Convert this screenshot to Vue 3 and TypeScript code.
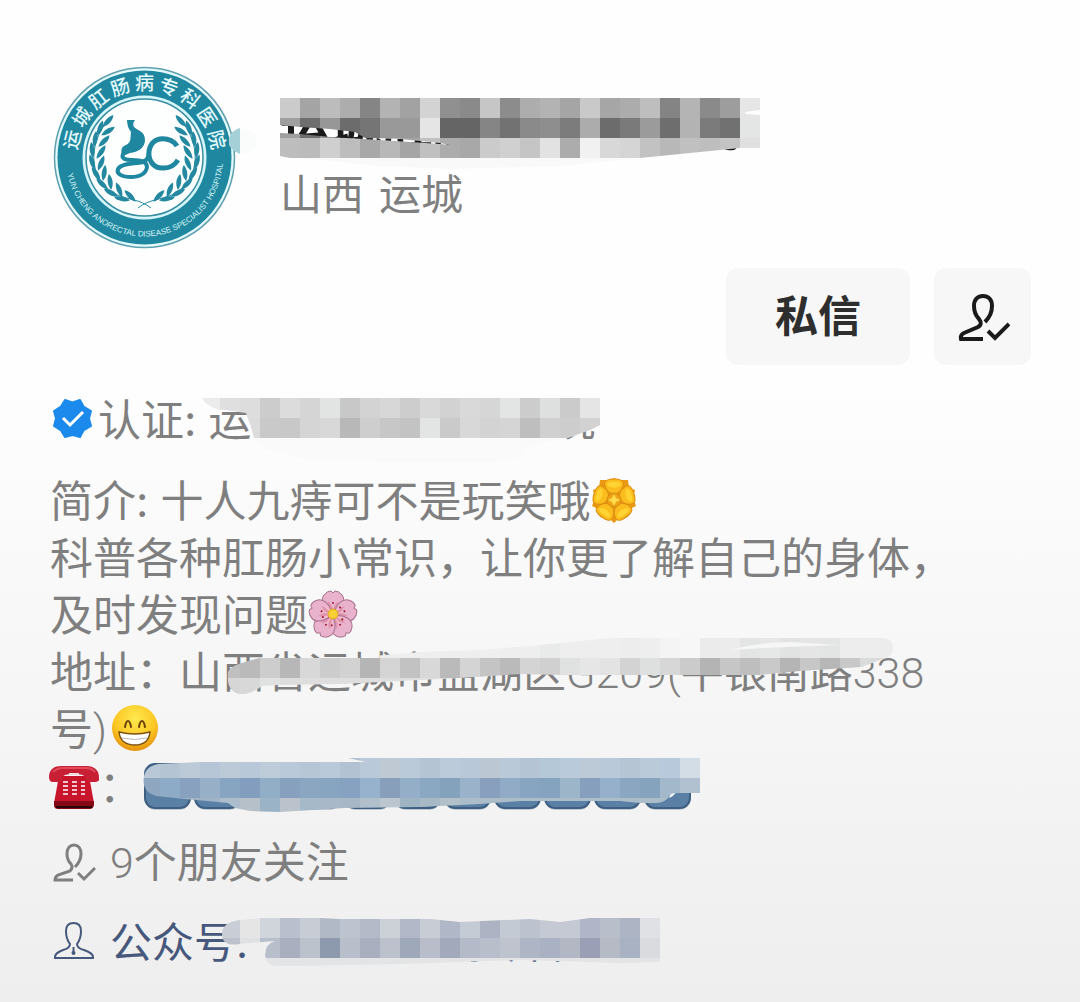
<script setup lang="ts">
interface Mosaic {
  id: string
  x: number
  y: number
  w: number
  h: number
  clip: string
  rows: { x: number; cells: string[] }[]
}

interface Cell {
  x: number
  y: number
  fill: string
}

const CELL = 20

const parse = (colors: string): string[] => colors.split(' ').map((c) => '#' + c)

const fill = (color: string, count: number): string[] => Array(count).fill('#' + color)

const cellsOf = (m: Mosaic): Cell[] =>
  m.rows.flatMap((row, r) =>
    row.cells.map((color, c) => ({ x: row.x + c * CELL, y: m.y + r * CELL, fill: color })),
  )

const masks: Record<string, Mosaic> = {
  name: {
    id: 'name', x: 280, y: 98, w: 480, h: 72,
    clip: 'M280 98H760V110L745 112L746 114L760 115V148H740L700 152L650 157L560 166L450 169L380 166L320 160L290 158L280 156V133L300 134L330 137L380 140L440 144L450 145L440 143L400 139L365 138L355 132L330 129L300 127L280 125Z',
    rows: [
      { x: 280, cells: parse('cbcbcb a4a4a4 bcbcbc adadad 858585 b3b3b3 a2a2a2 d3d3d3 909090 8a8a8a c6c6c6 8c8c8c adadad b3b3b3 a5a5a5 c9c9c9 a6a6a6 acacac bebebe 848484 b4b4b4 8a8a8a 9d9d9d e6e6e6') },
      { x: 280, cells: parse('9f9f9f 6e6e6e 979797 6c6c6c 757575 999999 999999 e5e5e5 656565 656565 858585 727272 8a8a8a 8e8e8e 7c7c7c acacac 6c6c6c 7a7a7a 9b9b9b 6e6e6e b3b3b3 7b7b7b 717171 e3e6e5') },
      { x: 280, cells: parse('bdbdbd bbbbbb cfcfcf bdbdbd a8a8a8 b8b8b8 a5a5a5 c0c0c0 acacac a8a8a8 cbcbcb d0d0d0 c5c5c5 e2e2e2 acacac f1f1f1 d8d8d8 d5d5d5 c2c2c2 b8b8b8 c0c0c0 bebebe c3c3c3 e0e0e0') },
      { x: 280, cells: fill('f9f9f9', 24) },
    ],
  },
  cert: {
    id: 'cert', x: 200, y: 398, w: 400, h: 64,
    clip: 'M202 398H600V425L590 430L568 438L525 448Q525 458 500 462H380L300 458L262 448L254 438L251 427L246 413L225 410Q208 409 202 398Z',
    rows: [
      { x: 200, cells: parse('ebebeb dfdfdf dddddd cccccc dcdcdc d5d5d5 e2e4e3 c8c8c8 d3d3d3 d7d7d7 cdcdcd d9d9d9 d2d2d2 d9d9d9 d6d6d6 e3e5e5 cccccc dedfdf cbcbcb e5e5e5') },
      { x: 240, cells: parse('dcdcdc c9c9c9 c8c8c8 d5d5d5 d8d8d8 b8b8b8 cecece c7c7c7 c3c3c3 e3e5e4 cacaca d8d8d8 d3d3d3 d5d5d5 bebebe d0d0d0 cdcdcd d2d2d2') },
      { x: 240, cells: fill('fafafa', 18) },
      { x: 240, cells: fill('fafafa', 18) },
    ],
  },
  address: {
    id: 'address', x: 220, y: 638, w: 680, h: 60,
    clip: 'M228 672C232 664 246 662 260 658H300L350 658L420 652L480 650L540 645L580 641L610 638H885Q893 640 893 648Q893 656 885 658L862 667L800 671L760 675H560L520 674L460 678L400 681L340 684L280 685L262 686Q250 695 240 694Q226 692 228 672Z',
    rows: [
      { x: 380, cells: parse('eeeeee eeeeee eeeeee eeeeee eeeeee eeefee eeeeee eeeeee e9ebea eeeeee eeeeee eeeeee ededed eeeeee f4f4f4 f7f7f7 ebebeb ececec e3e4e4 e6e8e7 e1e3e3 e5e5e5 e3e5e4 ededed ededed ececec') },
      { x: 220, cells: parse('bfbfbf bababa cdcdcd b7b7b7 d8d8d8 cccccc d2d2d2 b5b5b5 d5d5d5 c2c2c2 d8d8d8 bababa d4d4d4 c4c4c4 bababa d4d4d4 d0d0d0 e0e2e1 e6e6e6 e3e3e3 d3d3d3 dee0df d7d7d7 cbcbcb b4b4b4 c6c6c6 bebebe c9c9c9 b5b5b5 c7c7c7 b7b7b7 c8c8c8 dadcdb dddddd') },
      { x: 220, cells: [...parse('d6d6d6 d8d8d8 e0e1e1 dddddd'), ...fill('dedede', 14)] },
    ],
  },
  phone: {
    id: 'phone', x: 140, y: 758, w: 560, h: 56,
    clip: 'M144 785Q141 768 158 764L200 762H366L348 758H700V793H680Q672 793 668 798Q664 803 655 803H640L620 801H520L480 804L420 807L345 808L280 812L250 811L235 808L228 803L175 798L156 796Q146 793 144 785Z',
    rows: [
      { x: 140, cells: parse('b9c8d6 b5c4d3 bccad8 b6c6d6 bcc9d6 b8c8d8 becbd8 bac9d9 b7c6d5 b9c9d9 b3c2d3 b9c9da bec9d4 bbcad9 b5c4d3 bccbda b8c8d8 bbc8d4 b9c9d8 b5c4d4 b4c8d8 b9cadb bcc9d6 b9c9d9 b5c5d4 bacad9 b8c9dc d3dde6') },
      { x: 140, cells: parse('8fa6c0 8dabc6 88a1bf 97b0c8 87a4c0 829dbd 92adc6 86a0bd 8aa6c0 87a4c0 87a2c0 96b2cc 889fbc 95aec8 8ba8c2 85a2bd 9ab2ca 889fbd 91abc6 87a5c0 85a3bf 9db5c9 869fbd 96afca 8aa6c1 86a3bd a3b8ca b2c1d0') },
      { x: 140, cells: [...parse('9fb3c7 9fb3c7 9fb3c7 9fb3c7 aebdcb b6c0c9 9bb3c6 bcc2cb a6b9c8 a8b8c8 a8b7c6 b0bfcb bcc6ce 9fb4c3 a8b9c6 b2c0ca'), ...fill('acbdca', 12)] },
    ],
  },
  account: {
    id: 'account', x: 220, y: 918, w: 440, h: 48,
    clip: 'M222 934Q222 922 240 920L262 918H320L340 919H430L460 922L530 919L560 922L590 918H660V962L620 963L520 960L400 964L300 966H275Q266 965 265 955Q266 943 275 941L262 942L240 944Q222 947 222 934Z',
    rows: [
      { x: 220, cells: parse('c9ced6 e5e5e5 d0d5db b9bfcc c7ccd5 b1b8c6 bec4cf b5bac8 cbd1d7 b2b8c8 c7ccd5 b0b7c7 c5cbd4 aeb3c4 c4cad3 bcc3cf c5c9d4 c4c9d4 b0b6c7 b9becb adb4c4 dfe1e4') },
      { x: 220, cells: parse('bcc1cb dfe1e3 b8bfcb a9afbe bcc2cb 8d9aad b9bfca a9afbf bcc1cb 9fa8b9 b8bdc9 a2a9ba b5bac8 b9bfca bec3ce aeb5c4 a9b1c2 b3b7c4 9a9fb5 b5bac5 a9b2c2 d9dbdf') },
      { x: 220, cells: fill('e3e4e5', 22) },
    ],
  },
}

const hospital = '运城肛肠病专科医院'
const sealChars = [...hospital].map((char, i) => ({ char, angle: (i - 4) * 19 }))
const keycaps = Array.from({ length: 11 }, (_, i) => i * 50)
const petals = [0, 72, 144, 216, 288]

// One laurel half: centre point and rotation of every leaf on the left side.
const leaves: [number, number, number][] = [
  [108, 121, 42], [100, 128, 20], [108, 131, 58], [95, 139, 8], [104, 141, 44],
  [92, 150, -6], [101, 152, 34], [92, 162, -18], [101, 163, 22], [96, 174, -32],
  [104, 173, 8], [102, 184, -46], [110, 182, -8], [111, 193, -62], [119, 190, -22],
  [122, 199, -80], [130, 196, -44],
]
</script>

<template>
  <main class="page">
    <header class="head">
      <svg class="avatar" viewBox="53 66 204 183" role="img" aria-label="运城肛肠病专科医院">
        <defs>
          <path id="arc-bottom" d="M66 158A78.500 78.500 0 0 0 223 158" />
          <g id="laurel">
            <path d="M108 120C88 145 88 178 115 194C128 200 140 199 151 208" fill="none" stroke="#2489a0" stroke-width="1" />
            <path
              v-for="(l, i) in leaves"
              :key="i"
              d="M0 -8C4 -3 3 4 0 8C-3 3 -3 -3 0 -8Z"
              :transform="`translate(${l[0]} ${l[1]}) rotate(${l[2]})`"
              fill="#2489a0"
            />
          </g>
        </defs>
        <circle cx="144.500" cy="157.500" r="90" fill="#e2fafc" stroke="#5f9fae" stroke-width="1.500" />
        <circle cx="144.500" cy="157.500" r="87" fill="#1f88a0" />
        <circle cx="144.500" cy="157.500" r="62" fill="#d5f6fa" />
        <circle cx="144.500" cy="157.500" r="58.500" fill="#fdffff" stroke="#398ea1" stroke-width="1.500" />
        <text
          v-for="(s, i) in sealChars"
          :key="i"
          class="seal-cn"
          x="144.500"
          y="90"
          text-anchor="middle"
          :transform="`rotate(${s.angle} 144.500 157.500)`"
        >{{ s.char }}</text>
        <text class="seal-en"><textPath href="#arc-bottom" startOffset="16">YUN CHENG ANORECTAL DISEASE SPECIALIST HOSPITAL</textPath></text>
        <use href="#laurel" />
        <use href="#laurel" transform="translate(289 0) scale(-1 1)" />
        <path d="M127 120L135 120Q132 124 134 127C138 131 145 131 145 140C145 148 138 152 130 153L123 156C120 151 121 147 126 145C132 142 130 137 131 132Q127 127 127 120Z" fill="#1f88a0" />
        <path d="M123 154C121 159 126 160 132 160C141 160 147 162 147 167C146 174 139 177 131 177C122 177 116 174 118 169C121 163 134 164 143 162C149 159 148 156 149 152" fill="none" stroke="#1f88a0" stroke-width="4" stroke-linecap="round" />
        <path d="M177 146C172 137 152 134 149 151C148 162 155 169 164 168Q173 168 178 160" fill="none" stroke="#1f88a0" stroke-width="5" />
        <path d="M229 138Q232 130 240 128V154Q232 151 229 145Z" fill="#a5d0d8" />
        <path d="M240 128Q256 130 257 140Q257 152 240 154Z" fill="#fafcfc" />
      </svg>
      <div class="who">
        <h1 class="name">
          {{ hospital }}
          <svg class="mask mask-name" :width="masks.name.w" :height="masks.name.h" :viewBox="`${masks.name.x} ${masks.name.y} ${masks.name.w} ${masks.name.h}`" aria-hidden="true">
            <clipPath id="clip-name"><path :d="masks.name.clip" /></clipPath>
            <g clip-path="url(#clip-name)" shape-rendering="crispEdges">
              <rect v-for="(c, i) in cellsOf(masks.name)" :key="i" :x="c.x" :y="c.y" width="20" height="20" :fill="c.fill" />
            </g>
          </svg>
        </h1>
        <p class="region"><span>山西</span><span>运城</span></p>
      </div>
    </header>

    <div class="actions">
      <button type="button" class="btn message">私信</button>
      <button type="button" class="btn follow" aria-label="已关注">
        <svg width="54" height="50" viewBox="0 0 54 50" fill="none" stroke="#1a1a1a" stroke-width="4">
          <path d="M29 30C34 25 36 19 36 14C36 7 32 4 27 4C22 4 18 7 18 14C18 19 20 24 23 27C26 31 25 33 22 35L8 41Q4 43 5 47H27" />
          <path d="M32 39L39 46L53 32" />
        </svg>
      </button>
    </div>

    <p class="row cert">
      <svg class="badge" width="42" height="42" viewBox="0 0 42 42" aria-hidden="true">
        <path d="M13 2L20.500 4.500L28 2L31.500 8.500L39 13L37 20.500L39 28L31.500 32.500L28 39L20.500 37L13 39L9 32.500L2 28L4 20.500L2 13L9 8.500Z" fill="#1b8aec" stroke="#1b8aec" stroke-width="2" stroke-linejoin="round" />
        <path d="M11 20L18 27L31 14" fill="none" stroke="#fff" stroke-width="3" />
      </svg>
      <span>认证: {{ hospital }}</span>
      <svg class="mask mask-cert" :width="masks.cert.w" :height="masks.cert.h" :viewBox="`${masks.cert.x} ${masks.cert.y} ${masks.cert.w} ${masks.cert.h}`" aria-hidden="true">
        <clipPath id="clip-cert"><path :d="masks.cert.clip" /></clipPath>
        <g clip-path="url(#clip-cert)" shape-rendering="crispEdges">
          <rect v-for="(c, i) in cellsOf(masks.cert)" :key="i" :x="c.x" :y="c.y" width="20" height="20" :fill="c.fill" />
        </g>
      </svg>
    </p>

    <section class="bio">
      <p class="row">
        <span>简介: 十人九痔可不是玩笑哦</span>
        <svg class="emoji" width="48" height="48" viewBox="0 0 48 48" aria-hidden="true">
          <path d="M24 2L29 4L38 4L39 12L45 14L43 22L46 30L40 33L38 41L29 42L24 47L19 42L10 41L8 33L2 30L5 22L3 14L9 12L10 4L19 4Z" fill="#e99a12" />
          <g v-for="a in petals" :key="a" :transform="`rotate(${a} 24 24)`">
            <path d="M15 10C13 4 19 3 24 3C29 3 35 4 33 10Q31 17 24 18Q17 17 15 10Z" fill="#fbbd1d" stroke="#df8c10" stroke-width="1" />
            <path d="M17 9Q18 5 24 6Q30 5 31 9Q24 14 17 9Z" fill="#ffd432" />
          </g>
          <circle cx="24" cy="24" r="7" fill="#eda315" stroke="#d98a10" stroke-width="1" />
          <path d="M24 18L26 22L30 24L26 26L24 30L22 26L18 24L22 22Z" fill="#ffdc4b" />
        </svg>
      </p>
      <p class="row">科普各种肛肠小常识，让你更了解自己的身体，</p>
      <p class="row">
        <span>及时发现问题</span>
        <svg class="emoji" width="50" height="50" viewBox="0 0 50 50" aria-hidden="true">
          <g v-for="a in petals" :key="a" :transform="`rotate(${a} 25 26)`">
            <path d="M25 25C15 20 12 11 16 6Q19 2 23 2L25 4L27 2Q31 2 34 6C38 11 35 20 25 25Z" fill="#e9b3cd" stroke="#a9718c" stroke-width="1" />
            <path d="M25 25Q19 18 20 12L25 18L30 12Q31 18 25 25Z" fill="#e094ae" />
            <path d="M25 26V15M25 26L20 17M25 26L30 17" stroke="#f6c3cf" stroke-width="1" />
            <circle cx="25" cy="14" r="1" fill="#9a1830" />
            <circle cx="20" cy="17" r="1" fill="#9a1830" />
          </g>
          <circle cx="25" cy="25" r="5" fill="#f8cf35" stroke="#dca023" stroke-width="1" />
        </svg>
      </p>
      <p class="row">
        <span>地址：山西省运城市盐湖区<span class="thin">G209(</span>平银南路<span class="thin">338</span></span>
        <svg class="mask mask-address" :width="masks.address.w" :height="masks.address.h" :viewBox="`${masks.address.x} ${masks.address.y} ${masks.address.w} ${masks.address.h}`" aria-hidden="true">
          <clipPath id="clip-address"><path :d="masks.address.clip" /></clipPath>
          <g clip-path="url(#clip-address)" shape-rendering="crispEdges">
            <rect v-for="(c, i) in cellsOf(masks.address)" :key="i" :x="c.x" :y="c.y" width="20" height="20" :fill="c.fill" />
          </g>
          <path d="M729 650Q760 642 790 642L838 645Q780 647 729 650Z" fill="#f6f6f6" />
        </svg>
      </p>
      <p class="row">
        <span>号<span class="thin">)</span></span>
        <svg class="emoji grin" width="48" height="48" viewBox="0 0 48 48" aria-hidden="true">
          <defs>
            <radialGradient id="face" cx="0.5" cy="0.3" r="0.7">
              <stop offset="0" stop-color="#ffe94f" />
              <stop offset="0.65" stop-color="#fcc623" />
              <stop offset="1" stop-color="#e5920f" />
            </radialGradient>
          </defs>
          <circle cx="24" cy="24" r="23" fill="url(#face)" />
          <path d="M14 23Q15 17 17 17Q19 17 20 23M28 23Q29 17 31 17Q33 17 34 23" fill="none" stroke="#6d4208" stroke-width="2" stroke-linecap="round" />
          <path d="M8 28Q24 32 39 28C38 37 32 41 24 41C15 41 9 37 8 28Z" fill="#fff" stroke="#7d5210" stroke-width="1.500" />
          <path d="M11 34Q24 37 36 34" fill="none" stroke="#b8b8b8" stroke-width="1" />
        </svg>
      </p>
      <p class="row">
        <svg class="phone" width="50" height="46" viewBox="0 0 50 46" aria-hidden="true">
          <path d="M10 12H40L45 39Q45 44 41 44H9Q5 44 5 39Z" fill="#c8152b" />
          <path d="M5 37H45V41Q44 45 41 45H9Q5 45 5 41Z" fill="#850815" />
          <path d="M7 42H43V44H7Z" fill="#2c0509" />
          <path d="M0 13C0 5 6 2 12 2H38C45 2 50 6 50 13V16Q49 18 45 18H39Q36 17 36 13Q35 10 25 10Q14 10 14 13Q14 17 11 18H4Q0 18 0 13Z" fill="#c91f35" />
          <path d="M4 8Q8 4 14 4H37Q43 4 46 8" fill="none" stroke="#e04a5d" stroke-width="2" />
          <path d="M20 9H30V11H20Z" fill="#f4d9dc" />
          <path d="M14 18H19M23 18H28M32 18H36M14 22H19M23 22H28M32 22H36M14 26H19M23 26H28M32 26H36M14 30H19M23 30H28M32 30H36" stroke="#f5c5cb" stroke-width="2" />
        </svg>
        <span>：</span>
        <svg class="keys" width="550" height="48" viewBox="0 0 550 48" aria-hidden="true">
          <g v-for="x in keycaps" :key="x">
            <rect :x="x + 3" y="3" width="45" height="44" rx="10" fill="#c3cad1" />
            <rect :x="x + 3" y="1" width="45" height="44" rx="10" fill="#5b80a5" stroke="#3e5f82" stroke-width="2" />
            <path :d="`M${x + 7} 10Q${x + 9} 4 ${x + 15} 3H${x + 36}`" stroke="#b5dbea" stroke-width="2" fill="none" />
          </g>
        </svg>
        <svg class="mask mask-phone" :width="masks.phone.w" :height="masks.phone.h" :viewBox="`${masks.phone.x} ${masks.phone.y} ${masks.phone.w} ${masks.phone.h}`" aria-hidden="true">
          <clipPath id="clip-phone"><path :d="masks.phone.clip" /></clipPath>
          <g clip-path="url(#clip-phone)" shape-rendering="crispEdges">
            <rect v-for="(c, i) in cellsOf(masks.phone)" :key="i" :x="c.x" :y="c.y" width="20" height="20" :fill="c.fill" />
          </g>
          <path d="M669 798L671 794L675 793Q674 796 669 798Z" fill="#fff" />
        </svg>
      </p>
    </section>

    <p class="row friends">
      <svg class="glyph" width="44" height="40" viewBox="0 0 44 40" fill="none" stroke="#7f7f7f" stroke-width="3" aria-hidden="true">
        <path d="M23 24C27 20 29 15 29 11C29 5 26 2 22 2C18 2 15 5 15 11C15 15 17 19 19 21C21 24 20 26 18 28L6 32Q3 34 3 37H21" />
        <path d="M26 30L32 36L43 25" />
      </svg>
      <span><span class="thin">9</span>个朋友关注</span>
    </p>

    <p class="row account">
      <svg class="glyph glyph-account" width="44" height="40" viewBox="0 0 44 40" fill="none" stroke="#46587b" stroke-width="2" aria-hidden="true">
        <path d="M18 24C15 20 14 15 14 11C14 5 17 3 21.500 3C26 3 29 5 29 11C29 15 28 20 25 24C25 27 28 29 32 30Q41 33 41 37V38H3V37Q3 33 11 30C15 29 18 27 18 24Z" />
        <path d="M21.500 27V32" />
        <circle cx="21.500" cy="33" r="1" />
      </svg>
      <a href="#account"><span class="label">公众号:</span>{{ hospital }}</a>
      <svg class="mask mask-account" :width="masks.account.w" :height="masks.account.h" :viewBox="`${masks.account.x} ${masks.account.y} ${masks.account.w} ${masks.account.h}`" aria-hidden="true">
        <clipPath id="clip-account"><path :d="masks.account.clip" /></clipPath>
        <g clip-path="url(#clip-account)" shape-rendering="crispEdges">
          <rect v-for="(c, i) in cellsOf(masks.account)" :key="i" :x="c.x" :y="c.y" width="20" height="20" :fill="c.fill" />
        </g>
      </svg>
    </p>
  </main>
</template>

<style>
body {
  margin: 0;
  background: #eeeeee;
}
</style>

<style scoped>
.page {
  box-sizing: border-box;
  min-height: 100vh;
  padding: 66px 50px 32px;
  overflow: hidden;
  background: linear-gradient(#fefefe 0, #fefefe 38%, #f7f7f7 65%, #eeeeee 100%);
  color: #7f7f7f;
  font-family: Inter, "Noto Sans CJK SC", sans-serif;
  font-size: 43px;
  font-weight: 400;
  line-height: 57px;
}

.thin {
  font-family: Roboto, "Noto Sans CJK SC", sans-serif;
  font-weight: 300;
}

.head {
  display: flex;
  align-items: flex-start;
  gap: 23px;
  padding-left: 3px;
}

.avatar {
  flex: none;
  width: 204px;
  height: 183px;
}

.seal-cn {
  fill: #e2fafc;
  font-family: "Noto Sans CJK SC", sans-serif;
  font-size: 19px;
  font-weight: 500;
}

.seal-en {
  fill: #d3f3f6;
  font-family: "Liberation Sans", sans-serif;
  font-size: 8px;
}

.who {
  padding-top: 32px;
}

.name {
  position: relative;
  height: 60px;
  margin: 0;
  color: #1a1a1a;
  font-size: 51px;
  font-weight: 700;
  line-height: 60px;
  white-space: nowrap;
}

.region {
  display: flex;
  gap: 15px;
  margin: 8px 0 0;
  font-size: 42px;
  white-space: nowrap;
}

.mask {
  position: absolute;
  display: block;
}

.mask-name {
  top: 0;
  left: 0;
}

.mask-cert {
  top: 6px;
  left: 150px;
}

.mask-address {
  top: -6px;
  left: 170px;
}

.mask-phone {
  top: 0;
  left: 90px;
}

.mask-account {
  top: 4px;
  left: 170px;
}

.actions {
  display: flex;
  justify-content: flex-end;
  gap: 24px;
  margin: 19px -1px 27px 0;
}

.btn {
  display: flex;
  align-items: center;
  justify-content: center;
  height: 97px;
  padding: 0;
  border: 0;
  border-radius: 12px;
  background: #f7f7f7;
  color: #2e2e2e;
  font: 700 43px/57px Inter, "Noto Sans CJK SC", sans-serif;
}

.message {
  width: 184px;
}

.follow {
  width: 97px;
}

.row {
  position: relative;
  display: flex;
  align-items: center;
  height: 57px;
  margin: 0;
  white-space: pre;
}

.row svg {
  flex: none;
}

.badge {
  margin: 0 4px 4px 2px;
}

.cert {
  margin-bottom: 24px;
}

.emoji {
  margin-bottom: 3px;
}

.grin {
  margin-left: 4px;
}

.phone {
  margin-left: -1px;
}

.friends {
  margin-top: 19px;
}

.account {
  margin-top: 23px;
  font-size: 42px;
}

.glyph {
  margin-right: 14px;
  margin-left: 2px;
}

.glyph-account {
  margin-bottom: 6px;
}

.account a {
  color: #46587b;
  text-decoration: none;
}

.label {
  margin-right: 24px;
}
</style>
